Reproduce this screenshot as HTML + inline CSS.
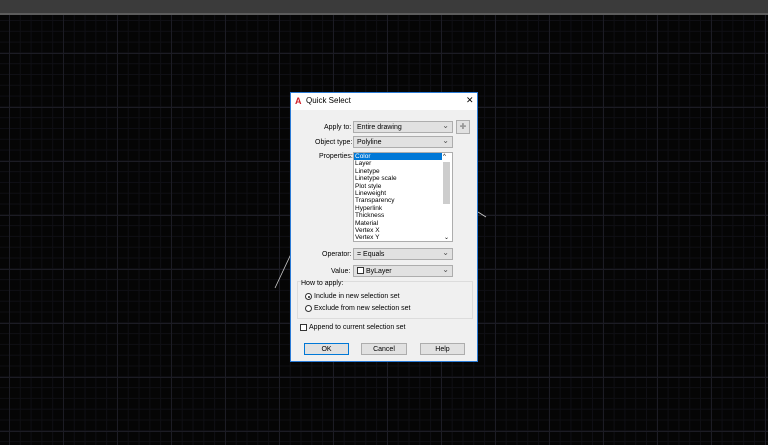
<!DOCTYPE html>
<html><head><style>
body{margin:0;width:768px;height:445px;overflow:hidden;background:#050505;font-family:"Liberation Sans",sans-serif;position:relative}
.grid{position:absolute;left:0;top:15px;width:768px;height:430px;
background-image:
linear-gradient(90deg,#1c1c24 1px,transparent 1px),
linear-gradient(0deg,#1c1c24 1px,transparent 1px),
linear-gradient(90deg,#0f0f14 1px,transparent 1px),
linear-gradient(0deg,#0f0f14 1px,transparent 1px);
background-size:54px 54px,54px 54px,10.8px 10.8px,10.8px 10.8px;
background-position:9px 0,0 39px,9px 0,0 6px}
.a{position:absolute}
.t{position:absolute;font-size:7px;color:#000;white-space:nowrap;line-height:8px}
.cb{position:absolute;background:#e1e1e1;border:1px solid #adadad;box-sizing:border-box;font-size:7px;line-height:11px;padding-left:3px}
.cb:after{content:"⌄";position:absolute;right:3px;top:-2px;font-size:8px;color:#555}
.btn{position:absolute;background:#e1e1e1;border:1px solid #adadad;box-sizing:border-box;font-size:7px;text-align:center;line-height:11px;top:343px;height:12px}
.rad{position:absolute;width:7px;height:7px;border:1px solid #333;border-radius:50%;background:#fff;box-sizing:border-box}
</style></head><body>
<div class="a" style="left:0;top:0;width:768px;height:13px;background:#3b3b3b"></div>
<div class="a" style="left:0;top:13px;width:768px;height:2px;background:#5c5c5c"></div>
<div class="grid"></div>
<svg class="a" style="left:0;top:0" width="768" height="445"><line x1="275" y1="288" x2="291" y2="254" stroke="#ccc" stroke-width="0.8"/><line x1="478" y1="212" x2="486" y2="217" stroke="#ccc" stroke-width="0.8"/></svg>
<div class="a" style="left:290px;top:92px;width:188px;height:270px;background:#f0f0f0;border:1px solid #2b7bd6;box-sizing:border-box"></div>
<div class="a" style="left:291px;top:93px;width:186px;height:17px;background:#fff"></div>
<div class="t" style="left:295px;top:97px;color:#d0202a;font-weight:bold;font-size:9px">A</div>
<div class="t" style="left:306px;top:97px;font-size:8px">Quick Select</div>
<div class="t" style="left:466px;top:96px;font-size:9px">✕</div>
<div class="t" style="left:324px;top:124px">Apply to:</div>
<div class="cb" style="left:353px;top:121px;width:100px;height:12px">Entire drawing</div>
<div class="a" style="left:456px;top:120px;width:14px;height:14px;background:#e1e1e1;border:1px solid #adadad;box-sizing:border-box;font-size:8px;text-align:center;line-height:12px;color:#555">✛</div>
<div class="t" style="left:315px;top:139px">Object type:</div>
<div class="cb" style="left:353px;top:136px;width:100px;height:12px">Polyline</div>
<div class="t" style="left:319px;top:153px">Properties:</div>
<div class="a" style="left:353px;top:152px;width:100px;height:90px;background:#fff;border:1px solid #adadad;box-sizing:border-box"></div>
<div class="a" style="left:354px;top:153px;width:88px;height:7px;background:#0078d7"></div>
<div class="a" style="left:443px;top:162px;width:7px;height:42px;background:#cdcdcd"></div>
<div class="t" style="left:443px;top:153px;font-size:6px">^</div>
<div class="t" style="left:444px;top:234px;font-size:6px">⌄</div>
<div class="t" style="left:355px;top:153px;line-height:7.4px;font-size:6.5px"><span style="color:#fff">Color</span><br>Layer<br>Linetype<br>Linetype scale<br>Plot style<br>Lineweight<br>Transparency<br>Hyperlink<br>Thickness<br>Material<br>Vertex X<br>Vertex Y</div>
<div class="t" style="left:322px;top:251px">Operator:</div>
<div class="cb" style="left:353px;top:248px;width:100px;height:12px">= Equals</div>
<div class="t" style="left:331px;top:268px">Value:</div>
<div class="cb" style="left:353px;top:265px;width:100px;height:12px"><span style="display:inline-block;width:5px;height:5px;border:1px solid #333;background:#fff;vertical-align:-1px"></span> ByLayer</div>
<div class="a" style="left:297px;top:281px;width:176px;height:38px;border:1px solid #dcdcdc;box-sizing:border-box"></div>
<div class="t" style="left:301px;top:280px">How to apply:</div>
<div class="rad" style="left:305px;top:293px"><div style="position:absolute;left:1.5px;top:1.5px;width:2px;height:2px;border-radius:50%;background:#222"></div></div>
<div class="t" style="left:314px;top:293px">Include in new selection set</div>
<div class="rad" style="left:305px;top:305px"></div>
<div class="t" style="left:314px;top:305px">Exclude from new selection set</div>
<div class="a" style="left:300px;top:324px;width:7px;height:7px;border:1px solid #333;background:#fff;box-sizing:border-box"></div>
<div class="t" style="left:309px;top:324px">Append to current selection set</div>
<div class="btn" style="left:304px;width:45px;border:1px solid #0078d7">OK</div>
<div class="btn" style="left:361px;width:46px">Cancel</div>
<div class="btn" style="left:420px;width:45px">Help</div>
</body></html>
